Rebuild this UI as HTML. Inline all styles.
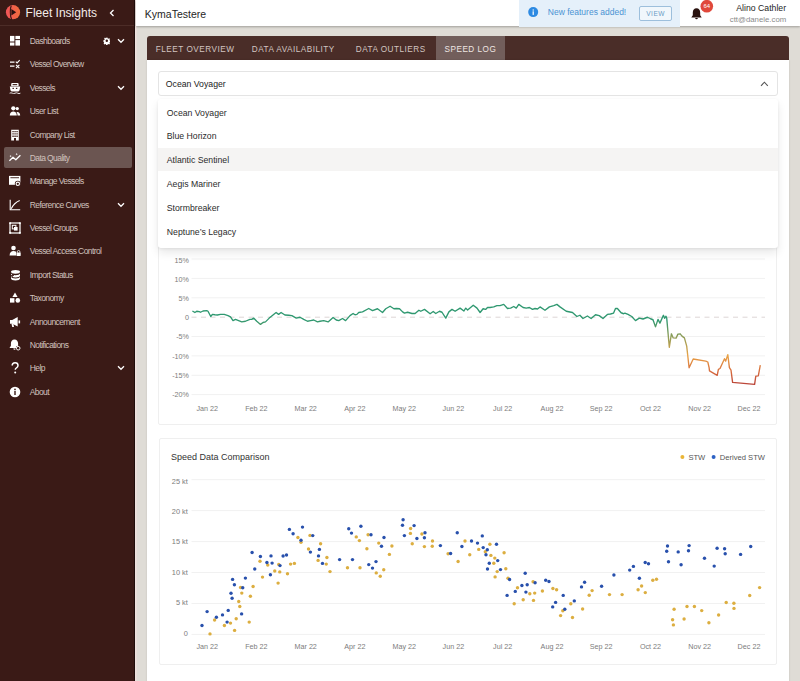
<!DOCTYPE html>
<html><head><meta charset="utf-8">
<style>
*{box-sizing:border-box;margin:0;padding:0}
html,body{width:800px;height:681px;overflow:hidden;background:#dfdcd6;font-family:"Liberation Sans",sans-serif;position:relative}
.abs{position:absolute}
.t{position:absolute;white-space:nowrap;line-height:1}
#sb{position:absolute;left:0;top:0;width:135px;height:681px;background:#3a1a16;border-right:1px solid #1f0d0b}
.st{position:absolute;left:29.8px;line-height:10px;height:10px;font-size:8.5px;letter-spacing:-0.6px;color:#d0c1bd;white-space:nowrap}
.tab{position:absolute;top:38px;height:23.5px;line-height:23.5px;font-size:8.2px;letter-spacing:0.5px;color:#d2c5c1;white-space:nowrap;padding:0 9px}
.dd{position:absolute;left:166.8px;font-size:8.7px;color:#2b2b2b;white-space:nowrap;line-height:10px}
svg text{font-family:"Liberation Sans",sans-serif}
</style></head><body>
<div id="sb">
  <svg class="abs" style="left:4.5px;top:4.8px" width="16" height="16" viewBox="0 0 16 16">
    <defs><linearGradient id="lgo" x1="0" y1="0" x2="1" y2="0"><stop offset="0" stop-color="#f2545a"/><stop offset="1" stop-color="#f06c3c"/></linearGradient></defs>
    <circle cx="8" cy="7.2" r="7.1" fill="url(#lgo)"/>
    <path d="M6.3 0.6 C4.9 3 4.9 11.5 6.6 14" stroke="#3a1a16" stroke-width="1.1" fill="none"/>
    <path d="M6.3 3.9 L11.2 7.3 L6.3 10.6 Z" fill="#2a1210"/>
  </svg>
  <div class="t" style="left:25.6px;top:7px;font-size:12px;color:#f4ece9">Fleet Insights</div>
  <svg class="abs" style="left:109px;top:9px" width="6" height="8" viewBox="0 0 6 8"><path d="M4.5 1 L1.5 4 L4.5 7" stroke="#fff" stroke-width="1.3" fill="none"/></svg>
  <div class="abs" style="left:0;top:24.5px;width:134px;height:1px;background:#4c2c27"></div>
  <div class="abs" style="left:4px;top:147px;width:128px;height:21px;background:#6b5551;border-radius:2px"></div>
  <svg class="abs" style="left:9px;top:35.10px" width="12" height="12" viewBox="0 0 12 12" fill="#fff"><rect x="1" y="0.9" width="4.4" height="5.6"/><rect x="6.4" y="0.9" width="4.6" height="3.2"/><rect x="1" y="7.5" width="4.4" height="3.1"/><rect x="6.4" y="5.1" width="4.6" height="5.5"/></svg><div class="st" style="top:36.10px">Dashboards</div><svg class="abs" style="left:117px;top:38.10px" width="8" height="6" viewBox="0 0 8 6"><path d="M1 1.3 L4 4.3 L7 1.3" stroke="#fff" stroke-width="1.3" fill="none"/></svg><svg class="abs" style="left:9px;top:58.47px" width="12" height="12" viewBox="0 0 12 12" fill="#fff"><path d="M1 4.2h4.5M1 8.2h4.5" stroke="#fff" stroke-width="1.2"/><path d="M6.8 3.6l1.3 1.3 2.6-2.8" stroke="#fff" stroke-width="1.1" fill="none"/><path d="M7 6.8l3.4 3.4M10.4 6.8l-3.4 3.4" stroke="#fff" stroke-width="1.1"/></svg><div class="st" style="top:59.47px">Vessel Overview</div><svg class="abs" style="left:9px;top:81.84px" width="12" height="12" viewBox="0 0 12 12" fill="#fff"><path d="M3.2 0.9h5.4a1 1 0 0 1 1 1v2.3H2.2V1.9a1 1 0 0 1 1-1z"/><rect x="3.6" y="2.1" width="4.6" height="1.1" fill="#3a1a16"/><path d="M0.8 4.6h10.4l-.6 3.4a2 2 0 0 1-2 1.5H3.4a2 2 0 0 1-2-1.5z"/><rect x="3.5" y="5.8" width="1.4" height="1.2" fill="#3a1a16"/><rect x="6.9" y="5.8" width="1.4" height="1.2" fill="#3a1a16"/><path d="M0.6 11.2q1.4-.8 2.7 0t2.7 0 2.7 0 2.7 0" stroke="#fff" stroke-width="0.9" fill="none"/></svg><div class="st" style="top:82.84px">Vessels</div><svg class="abs" style="left:117px;top:84.84px" width="8" height="6" viewBox="0 0 8 6"><path d="M1 1.3 L4 4.3 L7 1.3" stroke="#fff" stroke-width="1.3" fill="none"/></svg><svg class="abs" style="left:9px;top:105.21px" width="12" height="12" viewBox="0 0 12 12" fill="#fff"><circle cx="4.3" cy="3.3" r="2.1"/><circle cx="8.2" cy="3.6" r="1.7"/><path d="M0.8 10.5c0-2.6 1.5-4 3.5-4s3.5 1.4 3.5 4z"/><path d="M8.5 10.5c0-1.5-.4-2.6-1-3.3 2-.5 3.7.8 3.7 3.3z"/></svg><div class="st" style="top:106.21px">User List</div><svg class="abs" style="left:9px;top:128.58px" width="12" height="12" viewBox="0 0 12 12" fill="#fff"><path d="M2.2 0.8h7.6v10.6H2.2z M3.4 2v1.3h1.3V2z M5.4 2v1.3h1.3V2z M7.4 2v1.3h1.3V2z M3.4 4.3v1.3h1.3V4.3z M5.4 4.3v1.3h1.3V4.3z M7.4 4.3v1.3h1.3V4.3z M3.4 6.6v1.3h1.3V6.6z M5.4 6.6v1.3h1.3V6.6z M7.4 6.6v1.3h1.3V6.6z M5 9v2.4h2V9z" fill-rule="evenodd"/></svg><div class="st" style="top:129.58px">Company List</div><svg class="abs" style="left:9px;top:151.95px" width="12" height="12" viewBox="0 0 12 12" fill="#fff"><path d="M0.4 8.8L4 5.3l2.8 2.4L11.4 3.2" stroke="#fff" stroke-width="1.3" fill="none" stroke-linejoin="round"/><path d="M1.6 2.9l.35.8.8.35-.8.35-.35.8-.35-.8-.8-.35.8-.35z"/><path d="M7.7 1l.35.8.8.35-.8.35-.35.8-.35-.8-.8-.35.8-.35z"/></svg><div class="st" style="top:152.95px">Data Quality</div><svg class="abs" style="left:9px;top:175.32px" width="12" height="12" viewBox="0 0 12 12" fill="#fff"><path d="M0 0.9h11.4v8.9H0z"/><rect x="1.4" y="2.3" width="8.6" height="0.9" fill="#3a1a16"/><circle cx="8.8" cy="8.8" r="3" fill="#3a1a16"/><circle cx="8.8" cy="8.8" r="1.7" fill="none" stroke="#fff" stroke-width="1.1"/></svg><div class="st" style="top:176.32px">Manage Vessels</div><svg class="abs" style="left:9px;top:198.69px" width="12" height="12" viewBox="0 0 12 12" fill="#fff"><path d="M1.2 0.8v10h10" stroke="#fff" stroke-width="1.1" fill="none"/><path d="M2.2 9.8c2-4 4.5-6.5 8.5-8.2" stroke="#fff" stroke-width="1.1" fill="none"/></svg><div class="st" style="top:199.69px">Reference Curves</div><svg class="abs" style="left:117px;top:201.69px" width="8" height="6" viewBox="0 0 8 6"><path d="M1 1.3 L4 4.3 L7 1.3" stroke="#fff" stroke-width="1.3" fill="none"/></svg><svg class="abs" style="left:9px;top:222.06px" width="12" height="12" viewBox="0 0 12 12" fill="#fff"><rect x="1" y="1" width="10" height="10" fill="none" stroke="#fff" stroke-width="1.2"/><rect x="3.3" y="3.3" width="3.6" height="3.6" fill="none" stroke="#fff" stroke-width="1"/><rect x="5" y="5" width="3.6" height="3.6"/><rect x="0.3" y="0.3" width="1.8" height="1.8"/><rect x="9.9" y="0.3" width="1.8" height="1.8"/><rect x="0.3" y="9.9" width="1.8" height="1.8"/><rect x="9.9" y="9.9" width="1.8" height="1.8"/></svg><div class="st" style="top:223.06px">Vessel Groups</div><svg class="abs" style="left:9px;top:245.43px" width="12" height="12" viewBox="0 0 12 12" fill="#fff"><circle cx="4.5" cy="3" r="2.3"/><path d="M0.6 10.5c0-3 1.6-4.5 3.9-4.5 1.2 0 2 .3 2.6.8v3.7z"/><rect x="7.5" y="7.6" width="4.2" height="3.4" rx="0.4"/><path d="M8.3 7.8V6.8a1.3 1.3 0 0 1 2.6 0v1" stroke="#fff" stroke-width="0.8" fill="none"/></svg><div class="st" style="top:246.43px">Vessel Access Control</div><svg class="abs" style="left:9px;top:268.80px" width="12" height="12" viewBox="0 0 12 12" fill="#fff"><ellipse cx="6.5" cy="2.8" rx="4.5" ry="1.9"/><path d="M2 4.3c0 1.2 2 2 4.5 2s4.5-.8 4.5-2v2.3c0 1.2-2 2-4.5 2s-4.5-.8-4.5-2z"/><path d="M2 7.6c0 1.2 2 2 4.5 2s4.5-.8 4.5-2v1.9c0 1.2-2 2-4.5 2s-4.5-.8-4.5-2z"/><path d="M0.5 6.5h4l-1.3-1.3M4.5 6.5l-1.3 1.3" stroke="#3a1a16" stroke-width="0.9" fill="none"/></svg><div class="st" style="top:269.80px">Import Status</div><svg class="abs" style="left:9px;top:292.17px" width="12" height="12" viewBox="0 0 12 12" fill="#fff"><path d="M6 0.6l2.6 4.3H3.4z"/><rect x="1" y="6.2" width="4.4" height="4.4"/><circle cx="8.8" cy="8.4" r="2.3"/></svg><div class="st" style="top:293.17px">Taxonomy</div><svg class="abs" style="left:9px;top:315.54px" width="12" height="12" viewBox="0 0 12 12" fill="#fff"><path d="M1 4h2.2l5.5-3v9.6L3.2 7.7H1z"/><path d="M2.5 7.8h1.8l.7 3.2H3.2z"/><rect x="9.5" y="4.4" width="1.6" height="3"/></svg><div class="st" style="top:316.54px">Announcement</div><svg class="abs" style="left:9px;top:338.91px" width="12" height="12" viewBox="0 0 12 12" fill="#fff"><path d="M5.5 0.6c2.3 0 3.6 1.7 3.6 4v2.1L10.6 9H0.5l1.4-2.3V4.6c0-2.3 1.3-4 3.6-4z"/><path d="M4.3 9.6h2.4a1.2 1.2 0 0 1-2.4 0z"/><circle cx="9.2" cy="9.2" r="2.4" fill="#3a1a16"/><circle cx="9.2" cy="9.2" r="1.8" fill="none" stroke="#fff" stroke-width="1"/></svg><div class="st" style="top:339.91px">Notifications</div><svg class="abs" style="left:9px;top:362.28px" width="12" height="12" viewBox="0 0 12 12" fill="#fff"><path d="M3.2 3.6c0-1.8 1.3-2.8 2.9-2.8 1.7 0 2.9 1 2.9 2.6 0 1.5-1 2-1.8 2.6-.7.5-.9.9-.9 1.8" stroke="#fff" stroke-width="1.5" fill="none"/><circle cx="6.2" cy="10.4" r="1"/></svg><div class="st" style="top:363.28px">Help</div><svg class="abs" style="left:117px;top:365.28px" width="8" height="6" viewBox="0 0 8 6"><path d="M1 1.3 L4 4.3 L7 1.3" stroke="#fff" stroke-width="1.3" fill="none"/></svg><svg class="abs" style="left:9px;top:385.65px" width="12" height="12" viewBox="0 0 12 12" fill="#fff"><circle cx="6" cy="6" r="5.3"/><rect x="5.3" y="5" width="1.4" height="4" fill="#3a1a16"/><circle cx="6" cy="3.4" r="0.85" fill="#3a1a16"/></svg><div class="st" style="top:386.65px">About</div><svg class="abs" style="left:102.6px;top:37.3px" width="7.6" height="7.6" viewBox="0 0 10 10"><path fill="#fff" fill-rule="evenodd" d="M4.2 0.5h1.6l.3 1.3.9.4 1.1-.7 1.1 1.1-.7 1.1.4.9 1.3.3v1.6l-1.3.3-.4.9.7 1.1-1.1 1.1-1.1-.7-.9.4-.3 1.3H4.2l-.3-1.3-.9-.4-1.1.7-1.1-1.1.7-1.1-.4-.9L.5 5.8V4.2l1.3-.3.4-.9-.7-1.1 1.1-1.1 1.1.7.9-.4z M5 3.4a1.6 1.6 0 1 0 0 3.2 1.6 1.6 0 1 0 0-3.2z"/></svg>
</div>
<div class="abs" style="left:135px;top:0;width:2px;height:681px;background:linear-gradient(90deg,#f0e2de,#e6dcd8)"></div>
<div class="abs" style="left:136px;top:0;width:664px;height:26.3px;background:#fff;box-shadow:0 1px 2px rgba(0,0,0,.28)">
</div>
<div class="t" style="left:144.8px;top:9px;font-size:10.5px;color:#262626">KymaTestere</div>
<div class="abs" style="left:518.5px;top:0;width:161.3px;height:26.5px;background:#e5f0fa"></div>
<svg class="abs" style="left:527.5px;top:7.2px" width="11" height="11" viewBox="0 0 11 11"><circle cx="5.2" cy="5.1" r="5" fill="#2d8ae2"/><rect x="4.6" y="4.3" width="1.2" height="3.6" fill="#fff"/><circle cx="5.2" cy="3" r="0.7" fill="#fff"/></svg>
<div class="t" style="left:547.8px;top:8.2px;font-size:8.5px;color:#4b93d3">New features added!</div>
<div class="abs" style="left:639.2px;top:6px;width:32.8px;height:15.2px;border:1px solid #9dbfdc;border-radius:2px;background:#f1f7fc;font-size:6.6px;color:#6b9cc6;text-align:center;line-height:13.2px;letter-spacing:0.5px">VIEW</div>
<svg class="abs" style="left:689.5px;top:6.5px" width="13" height="14" viewBox="0 0 13 14"><path d="M6.5 1.2c2.3 0 3.7 1.8 3.7 4.2v2.8l1.5 2.2H1.3l1.5-2.2V5.4c0-2.4 1.4-4.2 3.7-4.2z" fill="#2a120f"/><path d="M5.2 11h2.6a1.3 1.3 0 0 1-2.6 0z" fill="#2a120f"/></svg>
<svg class="abs" style="left:699.8px;top:0px" width="14" height="13" viewBox="0 0 14 13"><circle cx="6.8" cy="6.2" r="6.3" fill="#e0483b"/><text x="6.8" y="8.3" text-anchor="middle" font-size="6" fill="#fff">64</text></svg>
<div class="t" style="left:736.3px;top:3.9px;font-size:8.7px;color:#1e1e1e">Alino Cathler</div>
<div class="t" style="left:729.8px;top:15.5px;font-size:7.8px;color:#8a8a8a">ctt@danele.com</div>

<div class="abs" style="left:146.8px;top:36.3px;width:642px;height:24px;background:#4a2d28;border-radius:3px 3px 0 0"></div>
<div class="tab" style="left:146.8px">FLEET OVERVIEW</div>
<div class="tab" style="left:242.8px">DATA AVAILABILITY</div>
<div class="tab" style="left:346.8px">DATA OUTLIERS</div>
<div class="abs" style="left:435.5px;top:36.3px;width:69.5px;height:24px;background:#725e5b"></div>
<div class="tab" style="left:435.5px;color:#efe6e3">SPEED LOG</div>
<div class="abs" style="left:146.8px;top:60.3px;width:642px;height:630px;background:#fff;box-shadow:0 0 2px rgba(0,0,0,.12)"></div>

<div class="abs" style="left:158px;top:71.4px;width:619.5px;height:24.2px;border:1px solid #e4e4e4;border-radius:3px;background:#fff"></div>
<div class="t" style="left:165.8px;top:80.3px;font-size:8.7px;color:#222">Ocean Voyager</div>
<svg class="abs" style="left:759px;top:80px" width="12" height="8" viewBox="0 0 12 8"><path d="M2 5.8 L5.4 2.2 L8.8 5.8" stroke="#555" stroke-width="1.1" fill="none"/></svg>

<div class="abs" style="left:158px;top:246px;width:619px;height:178.8px;border:1px solid #efefef;border-radius:2px;background:#fff"></div>
<div class="abs" style="left:158.5px;top:438px;width:618.5px;height:226.5px;border:1px solid #efefef;border-radius:2px;background:#fff"></div>
<div class="t" style="left:171px;top:452.8px;font-size:9px;color:#333">Speed Data Comparison</div>
<svg class="abs" style="left:678px;top:452px" width="100" height="10" viewBox="678 452 100 10">
<circle cx="682.4" cy="457" r="2" fill="#eab536"/><text x="688.4" y="459.8" font-size="7.6" fill="#555">STW</text>
<circle cx="713.6" cy="457" r="2" fill="#2d62c4"/><text x="719.8" y="459.8" font-size="7.6" fill="#555">Derived STW</text>
</svg>

<svg class="abs" style="left:0;top:0" width="800" height="681" viewBox="0 0 800 681">
<defs><linearGradient id="lg" gradientUnits="userSpaceOnUse" x1="0" y1="317" x2="0" y2="385">
<stop offset="0" stop-color="#2f9870"/><stop offset="0.05" stop-color="#2f9870"/><stop offset="0.24" stop-color="#7f9c5c"/><stop offset="0.57" stop-color="#e9a346"/><stop offset="0.81" stop-color="#d66a3e"/><stop offset="1" stop-color="#b9443a"/></linearGradient></defs>
<line x1="191.5" x2="765" y1="259.0" y2="259.0" stroke="#f1f1f1" stroke-width="1"/><line x1="191.5" x2="765" y1="278.4" y2="278.4" stroke="#f1f1f1" stroke-width="1"/><line x1="191.5" x2="765" y1="297.8" y2="297.8" stroke="#f1f1f1" stroke-width="1"/><line x1="191.5" x2="765" y1="317.2" y2="317.2" stroke="#ddd6d6" stroke-width="1" stroke-dasharray="5 4.5"/><line x1="191.5" x2="765" y1="336.5" y2="336.5" stroke="#f1f1f1" stroke-width="1"/><line x1="191.5" x2="765" y1="355.9" y2="355.9" stroke="#f1f1f1" stroke-width="1"/><line x1="191.5" x2="765" y1="375.3" y2="375.3" stroke="#f1f1f1" stroke-width="1"/><line x1="191.5" x2="765" y1="394.6" y2="394.6" stroke="#f1f1f1" stroke-width="1"/><text x="189" y="262.80" text-anchor="end" font-size="7.2" fill="#7c7c7c">15%</text><text x="189" y="281.97" text-anchor="end" font-size="7.2" fill="#7c7c7c">10%</text><text x="189" y="301.14" text-anchor="end" font-size="7.2" fill="#7c7c7c">5%</text><text x="189" y="320.31" text-anchor="end" font-size="7.2" fill="#7c7c7c">0</text><text x="189" y="339.48" text-anchor="end" font-size="7.2" fill="#7c7c7c">-5%</text><text x="189" y="358.65" text-anchor="end" font-size="7.2" fill="#7c7c7c">-10%</text><text x="189" y="377.82" text-anchor="end" font-size="7.2" fill="#7c7c7c">-15%</text><text x="189" y="396.99" text-anchor="end" font-size="7.2" fill="#7c7c7c">-20%</text><text x="207.2" y="411.2" text-anchor="middle" font-size="7.2" fill="#7c7c7c">Jan 22</text><text x="256.4" y="411.2" text-anchor="middle" font-size="7.2" fill="#7c7c7c">Feb 22</text><text x="305.7" y="411.2" text-anchor="middle" font-size="7.2" fill="#7c7c7c">Mar 22</text><text x="354.9" y="411.2" text-anchor="middle" font-size="7.2" fill="#7c7c7c">Apr 22</text><text x="404.2" y="411.2" text-anchor="middle" font-size="7.2" fill="#7c7c7c">May 22</text><text x="453.4" y="411.2" text-anchor="middle" font-size="7.2" fill="#7c7c7c">Jun 22</text><text x="502.7" y="411.2" text-anchor="middle" font-size="7.2" fill="#7c7c7c">Jul 22</text><text x="552.0" y="411.2" text-anchor="middle" font-size="7.2" fill="#7c7c7c">Aug 22</text><text x="601.2" y="411.2" text-anchor="middle" font-size="7.2" fill="#7c7c7c">Sep 22</text><text x="650.5" y="411.2" text-anchor="middle" font-size="7.2" fill="#7c7c7c">Oct 22</text><text x="699.7" y="411.2" text-anchor="middle" font-size="7.2" fill="#7c7c7c">Nov 22</text><text x="749.0" y="411.2" text-anchor="middle" font-size="7.2" fill="#7c7c7c">Dec 22</text><polyline points="192.4,311 194.9,312.5 196.75,311.25 199.25,311.6 200.5,312.25 203,311 206.75,310.6 208,311.25 210.75,316.5 212.4,314.4 214.9,314.75 217.4,315 220.5,314.4 224.25,314.4 228,315.6 230.5,316.9 233,320.6 235.5,319.4 238.6,320.6 241.75,321.9 245.5,321.25 249.9,319.4 251.75,319.4 253.6,318.1 256.75,321.25 260.5,324.4 263,322.5 265.5,321.9 269.25,318.1 273,315 276.1,312.5 278.6,314.4 281.1,312.5 284.9,315 288.75,315.25 291.9,315.6 296.25,318.1 300,317.25 303.75,319.4 307.5,321.25 310.6,320.6 313.75,320 317.5,321.9 320,321.25 323.75,320.6 328.1,321.9 333.1,317.5 336.25,320 338.75,320.6 342.5,318.5 345.6,320.6 350,315.6 353.1,313.5 355,314.75 356.9,314.4 358.75,312.5 362.5,311.9 368.75,308.5 372.5,310.6 377.5,308.75 382.5,312.5 385.75,308.75 390.1,306.25 393.9,308.75 396.4,308.5 399.5,308.75 402.6,311.9 404.5,313.1 407.6,312.25 412,313.5 415.1,313.5 418.9,310.25 420.75,311.25 424.5,309.4 430.1,313.75 433.25,311.5 435.75,313.5 439.5,311.25 442,312.25 445.75,318.1 448.9,311.9 452,309.4 455.1,311.25 460.1,308.1 463.9,311 465.75,308.1 467.6,310 473.25,305.25 477,308.1 480.1,312.5 483.1,308.75 485.6,309.4 487.5,307.5 490,307.5 493.75,306.9 496.9,305.6 500,305.6 503.75,304.4 507.5,308.5 510.6,308.1 513.75,306.5 516.25,308.1 518.75,304.4 523.1,307.5 526.25,308.1 529.4,307.5 532.5,309.4 535,308.5 537.5,309 540,306.9 545,310.25 549.4,306.9 553.75,305.6 556.9,304.4 560,306.9 566.25,311.25 572.5,312.5 576.9,316.5 579.9,315.25 583,318.5 587.4,316 591.1,318.5 595.5,314.75 599.25,315.6 603,318.5 607.4,314.4 610.5,314 613.6,313.1 615.5,308.5 617.4,308.5 621.1,312.75 623.6,313.75 624.9,313.1 628,314.4 631.75,316.5 635.5,320.6 639.25,318.1 643,319 647.4,317.25 650.5,318.75 653,319.75 655.5,326.9 658,319.4 659.9,323.1 663.4,315.3 664.6,318.3 666,316.2 666.7,317.9 669.3,347.3 671.4,333.8 673.2,337.9 676.1,338.1 677.9,334.1 680.2,333.8 682,336.1 684.4,337.9 686.7,346.1 689.1,367.8 693.2,359 705.8,361.1 707.8,362 709.1,367.6 709.5,370.9 717.2,375.4 718.4,369.3 720,368.5 724.5,358.7 725.7,361.1 727.8,354.6 729.4,367.6 731,370.1 732.6,382.3 754.6,384.3 755.8,376.2 758.3,375.8 760.3,365.2" fill="none" stroke="url(#lg)" stroke-width="1.35" stroke-linejoin="round"/>
<line x1="191.5" x2="765" y1="479.7" y2="479.7" stroke="#f1f1f1" stroke-width="1"/><line x1="191.5" x2="765" y1="510.6" y2="510.6" stroke="#f1f1f1" stroke-width="1"/><line x1="191.5" x2="765" y1="541.6" y2="541.6" stroke="#f1f1f1" stroke-width="1"/><line x1="191.5" x2="765" y1="572.5" y2="572.5" stroke="#f1f1f1" stroke-width="1"/><line x1="191.5" x2="765" y1="603.5" y2="603.5" stroke="#f1f1f1" stroke-width="1"/><line x1="191.5" x2="765" y1="634.4" y2="634.4" stroke="#f1f1f1" stroke-width="1"/><text x="187.8" y="483.60" text-anchor="end" font-size="7.4" fill="#7c7c7c">25 kt</text><text x="187.8" y="514.04" text-anchor="end" font-size="7.4" fill="#7c7c7c">20 kt</text><text x="187.8" y="544.48" text-anchor="end" font-size="7.4" fill="#7c7c7c">15 kt</text><text x="187.8" y="574.92" text-anchor="end" font-size="7.4" fill="#7c7c7c">10 kt</text><text x="187.8" y="605.36" text-anchor="end" font-size="7.4" fill="#7c7c7c">5 kt</text><text x="187.8" y="635.80" text-anchor="end" font-size="7.4" fill="#7c7c7c">0</text><text x="207.2" y="649" text-anchor="middle" font-size="7.2" fill="#7c7c7c">Jan 22</text><text x="256.4" y="649" text-anchor="middle" font-size="7.2" fill="#7c7c7c">Feb 22</text><text x="305.7" y="649" text-anchor="middle" font-size="7.2" fill="#7c7c7c">Mar 22</text><text x="354.9" y="649" text-anchor="middle" font-size="7.2" fill="#7c7c7c">Apr 22</text><text x="404.2" y="649" text-anchor="middle" font-size="7.2" fill="#7c7c7c">May 22</text><text x="453.4" y="649" text-anchor="middle" font-size="7.2" fill="#7c7c7c">Jun 22</text><text x="502.7" y="649" text-anchor="middle" font-size="7.2" fill="#7c7c7c">Jul 22</text><text x="552.0" y="649" text-anchor="middle" font-size="7.2" fill="#7c7c7c">Aug 22</text><text x="601.2" y="649" text-anchor="middle" font-size="7.2" fill="#7c7c7c">Sep 22</text><text x="650.5" y="649" text-anchor="middle" font-size="7.2" fill="#7c7c7c">Oct 22</text><text x="699.7" y="649" text-anchor="middle" font-size="7.2" fill="#7c7c7c">Nov 22</text><text x="749.0" y="649" text-anchor="middle" font-size="7.2" fill="#7c7c7c">Dec 22</text><circle cx="241.8" cy="593.1" r="1.7" fill="#dcae40"/><circle cx="250.4" cy="596.2" r="1.7" fill="#dcae40"/><circle cx="238.75" cy="601.5" r="1.7" fill="#dcae40"/><circle cx="239.8" cy="606.5" r="1.7" fill="#dcae40"/><circle cx="214.6" cy="620" r="1.7" fill="#dcae40"/><circle cx="236.2" cy="618.8" r="1.7" fill="#dcae40"/><circle cx="230.5" cy="623.1" r="1.7" fill="#dcae40"/><circle cx="224.4" cy="625.5" r="1.7" fill="#dcae40"/><circle cx="234.6" cy="630.4" r="1.7" fill="#dcae40"/><circle cx="249.2" cy="622.1" r="1.7" fill="#dcae40"/><circle cx="210" cy="633.9" r="1.7" fill="#dcae40"/><circle cx="260" cy="561.25" r="1.7" fill="#dcae40"/><circle cx="267.75" cy="565" r="1.7" fill="#dcae40"/><circle cx="278.75" cy="564.4" r="1.7" fill="#dcae40"/><circle cx="274.75" cy="571" r="1.7" fill="#dcae40"/><circle cx="279.75" cy="571.9" r="1.7" fill="#dcae40"/><circle cx="287.5" cy="573.75" r="1.7" fill="#dcae40"/><circle cx="262.5" cy="577.1" r="1.7" fill="#dcae40"/><circle cx="253.1" cy="586.5" r="1.7" fill="#dcae40"/><circle cx="278.1" cy="583.1" r="1.7" fill="#dcae40"/><circle cx="240.6" cy="587.5" r="1.7" fill="#dcae40"/><circle cx="297.9" cy="537.5" r="1.7" fill="#dcae40"/><circle cx="310" cy="535.4" r="1.7" fill="#dcae40"/><circle cx="301" cy="542.25" r="1.7" fill="#dcae40"/><circle cx="320.6" cy="543.75" r="1.7" fill="#dcae40"/><circle cx="308.5" cy="549" r="1.7" fill="#dcae40"/><circle cx="326.9" cy="557.5" r="1.7" fill="#dcae40"/><circle cx="318.1" cy="560.4" r="1.7" fill="#dcae40"/><circle cx="326.25" cy="564.1" r="1.7" fill="#dcae40"/><circle cx="290.6" cy="564.1" r="1.7" fill="#dcae40"/><circle cx="294.4" cy="563.4" r="1.7" fill="#dcae40"/><circle cx="330" cy="571.6" r="1.7" fill="#dcae40"/><circle cx="347.5" cy="567.75" r="1.7" fill="#dcae40"/><circle cx="360" cy="567.75" r="1.7" fill="#dcae40"/><circle cx="356.25" cy="536.9" r="1.7" fill="#dcae40"/><circle cx="359.4" cy="540.6" r="1.7" fill="#dcae40"/><circle cx="368.1" cy="534.75" r="1.7" fill="#dcae40"/><circle cx="378.75" cy="543.1" r="1.7" fill="#dcae40"/><circle cx="366.9" cy="548.75" r="1.7" fill="#dcae40"/><circle cx="383.75" cy="569.75" r="1.7" fill="#dcae40"/><circle cx="376.25" cy="572.9" r="1.7" fill="#dcae40"/><circle cx="380.25" cy="576.25" r="1.7" fill="#dcae40"/><circle cx="410.6" cy="528.5" r="1.7" fill="#dcae40"/><circle cx="410.4" cy="533.4" r="1.7" fill="#dcae40"/><circle cx="421.9" cy="534" r="1.7" fill="#dcae40"/><circle cx="412.25" cy="543.75" r="1.7" fill="#dcae40"/><circle cx="432.5" cy="541" r="1.7" fill="#dcae40"/><circle cx="424.4" cy="546.6" r="1.7" fill="#dcae40"/><circle cx="432.25" cy="546.25" r="1.7" fill="#dcae40"/><circle cx="391.9" cy="546" r="1.7" fill="#dcae40"/><circle cx="389.4" cy="554.4" r="1.7" fill="#dcae40"/><circle cx="448.1" cy="553.75" r="1.7" fill="#dcae40"/><circle cx="458.1" cy="561.5" r="1.7" fill="#dcae40"/><circle cx="465" cy="541" r="1.7" fill="#dcae40"/><circle cx="469.75" cy="554.75" r="1.7" fill="#dcae40"/><circle cx="478.75" cy="549.4" r="1.7" fill="#dcae40"/><circle cx="489.9" cy="544.3" r="1.7" fill="#dcae40"/><circle cx="485.3" cy="551.8" r="1.7" fill="#dcae40"/><circle cx="504.1" cy="552.7" r="1.7" fill="#dcae40"/><circle cx="490.9" cy="555.4" r="1.7" fill="#dcae40"/><circle cx="494.8" cy="558.1" r="1.7" fill="#dcae40"/><circle cx="493.8" cy="563.3" r="1.7" fill="#dcae40"/><circle cx="505.8" cy="568.7" r="1.7" fill="#dcae40"/><circle cx="497.2" cy="571.6" r="1.7" fill="#dcae40"/><circle cx="495.1" cy="576.9" r="1.7" fill="#dcae40"/><circle cx="508" cy="578.2" r="1.7" fill="#dcae40"/><circle cx="517.5" cy="587.7" r="1.7" fill="#dcae40"/><circle cx="533.1" cy="581.8" r="1.7" fill="#dcae40"/><circle cx="542.4" cy="591" r="1.7" fill="#dcae40"/><circle cx="534.7" cy="593.1" r="1.7" fill="#dcae40"/><circle cx="529.8" cy="593.8" r="1.7" fill="#dcae40"/><circle cx="552.9" cy="588.5" r="1.7" fill="#dcae40"/><circle cx="556.6" cy="589.7" r="1.7" fill="#dcae40"/><circle cx="523.2" cy="599.7" r="1.7" fill="#dcae40"/><circle cx="533.5" cy="600.4" r="1.7" fill="#dcae40"/><circle cx="514.2" cy="603.7" r="1.7" fill="#dcae40"/><circle cx="570.8" cy="603.7" r="1.7" fill="#dcae40"/><circle cx="562.8" cy="610.8" r="1.7" fill="#dcae40"/><circle cx="560.6" cy="615.6" r="1.7" fill="#dcae40"/><circle cx="572.5" cy="617.5" r="1.7" fill="#dcae40"/><circle cx="582.6" cy="609" r="1.7" fill="#dcae40"/><circle cx="589.2" cy="595.2" r="1.7" fill="#dcae40"/><circle cx="592.1" cy="590.6" r="1.7" fill="#dcae40"/><circle cx="609.5" cy="594.6" r="1.7" fill="#dcae40"/><circle cx="622.1" cy="594.6" r="1.7" fill="#dcae40"/><circle cx="638.1" cy="589.8" r="1.7" fill="#dcae40"/><circle cx="641.6" cy="586" r="1.7" fill="#dcae40"/><circle cx="645.3" cy="592.6" r="1.7" fill="#dcae40"/><circle cx="652.8" cy="580.3" r="1.7" fill="#dcae40"/><circle cx="656.5" cy="579.2" r="1.7" fill="#dcae40"/><circle cx="759.6" cy="587.6" r="1.7" fill="#dcae40"/><circle cx="749.7" cy="595.5" r="1.7" fill="#dcae40"/><circle cx="726.2" cy="602.5" r="1.7" fill="#dcae40"/><circle cx="733.9" cy="603.3" r="1.7" fill="#dcae40"/><circle cx="734" cy="608.4" r="1.7" fill="#dcae40"/><circle cx="687" cy="606.5" r="1.7" fill="#dcae40"/><circle cx="694.4" cy="606.5" r="1.7" fill="#dcae40"/><circle cx="674.1" cy="609.2" r="1.7" fill="#dcae40"/><circle cx="701.7" cy="610.6" r="1.7" fill="#dcae40"/><circle cx="718.6" cy="615" r="1.7" fill="#dcae40"/><circle cx="672.6" cy="619.7" r="1.7" fill="#dcae40"/><circle cx="684.1" cy="619" r="1.7" fill="#dcae40"/><circle cx="673.4" cy="624.9" r="1.7" fill="#dcae40"/><circle cx="708.9" cy="622.8" r="1.7" fill="#dcae40"/><circle cx="231" cy="593.3" r="1.7" fill="#2850ac"/><circle cx="232.1" cy="598.2" r="1.7" fill="#2850ac"/><circle cx="207.1" cy="611.6" r="1.7" fill="#2850ac"/><circle cx="228.2" cy="610.4" r="1.7" fill="#2850ac"/><circle cx="216.4" cy="617.2" r="1.7" fill="#2850ac"/><circle cx="222.5" cy="614.9" r="1.7" fill="#2850ac"/><circle cx="241.6" cy="613.9" r="1.7" fill="#2850ac"/><circle cx="227.1" cy="622.1" r="1.7" fill="#2850ac"/><circle cx="202" cy="625.5" r="1.7" fill="#2850ac"/><circle cx="252.1" cy="552.5" r="1.7" fill="#2850ac"/><circle cx="260.4" cy="556.5" r="1.7" fill="#2850ac"/><circle cx="271" cy="555.9" r="1.7" fill="#2850ac"/><circle cx="283.1" cy="556" r="1.7" fill="#2850ac"/><circle cx="286.5" cy="555" r="1.7" fill="#2850ac"/><circle cx="289.4" cy="529.4" r="1.7" fill="#2850ac"/><circle cx="266.9" cy="562.5" r="1.7" fill="#2850ac"/><circle cx="272.1" cy="563.1" r="1.7" fill="#2850ac"/><circle cx="280" cy="565.6" r="1.7" fill="#2850ac"/><circle cx="254.75" cy="569" r="1.7" fill="#2850ac"/><circle cx="270.4" cy="574.75" r="1.7" fill="#2850ac"/><circle cx="232.6" cy="579.4" r="1.7" fill="#2850ac"/><circle cx="245.4" cy="578.1" r="1.7" fill="#2850ac"/><circle cx="234.4" cy="584.75" r="1.7" fill="#2850ac"/><circle cx="242.75" cy="587.75" r="1.7" fill="#2850ac"/><circle cx="302.5" cy="527.1" r="1.7" fill="#2850ac"/><circle cx="293.1" cy="533.75" r="1.7" fill="#2850ac"/><circle cx="312.75" cy="535.6" r="1.7" fill="#2850ac"/><circle cx="301" cy="540.25" r="1.7" fill="#2850ac"/><circle cx="319.4" cy="549.4" r="1.7" fill="#2850ac"/><circle cx="310.4" cy="552.1" r="1.7" fill="#2850ac"/><circle cx="318.5" cy="555.9" r="1.7" fill="#2850ac"/><circle cx="322.5" cy="563.4" r="1.7" fill="#2850ac"/><circle cx="339.6" cy="559.6" r="1.7" fill="#2850ac"/><circle cx="352.5" cy="559.6" r="1.7" fill="#2850ac"/><circle cx="348.75" cy="528.75" r="1.7" fill="#2850ac"/><circle cx="360.9" cy="526.25" r="1.7" fill="#2850ac"/><circle cx="351.5" cy="533.1" r="1.7" fill="#2850ac"/><circle cx="371" cy="534.75" r="1.7" fill="#2850ac"/><circle cx="384" cy="537.5" r="1.7" fill="#2850ac"/><circle cx="381.5" cy="546.25" r="1.7" fill="#2850ac"/><circle cx="376" cy="561.6" r="1.7" fill="#2850ac"/><circle cx="368.75" cy="564.6" r="1.7" fill="#2850ac"/><circle cx="372.5" cy="568.1" r="1.7" fill="#2850ac"/><circle cx="403.1" cy="519.75" r="1.7" fill="#2850ac"/><circle cx="402.5" cy="525.25" r="1.7" fill="#2850ac"/><circle cx="414.1" cy="525.6" r="1.7" fill="#2850ac"/><circle cx="404.4" cy="535.6" r="1.7" fill="#2850ac"/><circle cx="416.9" cy="538.5" r="1.7" fill="#2850ac"/><circle cx="425" cy="532.75" r="1.7" fill="#2850ac"/><circle cx="424.4" cy="537.75" r="1.7" fill="#2850ac"/><circle cx="440.4" cy="545.6" r="1.7" fill="#2850ac"/><circle cx="450.6" cy="553.5" r="1.7" fill="#2850ac"/><circle cx="457.25" cy="532.75" r="1.7" fill="#2850ac"/><circle cx="461.9" cy="546.5" r="1.7" fill="#2850ac"/><circle cx="471.5" cy="541" r="1.7" fill="#2850ac"/><circle cx="477.5" cy="543.1" r="1.7" fill="#2850ac"/><circle cx="482.3" cy="535.9" r="1.7" fill="#2850ac"/><circle cx="496.5" cy="544.3" r="1.7" fill="#2850ac"/><circle cx="483.2" cy="547.6" r="1.7" fill="#2850ac"/><circle cx="487.3" cy="549.8" r="1.7" fill="#2850ac"/><circle cx="486" cy="554.8" r="1.7" fill="#2850ac"/><circle cx="497.7" cy="560.6" r="1.7" fill="#2850ac"/><circle cx="489.3" cy="563.3" r="1.7" fill="#2850ac"/><circle cx="487.5" cy="569" r="1.7" fill="#2850ac"/><circle cx="500.5" cy="569.6" r="1.7" fill="#2850ac"/><circle cx="525.2" cy="573.2" r="1.7" fill="#2850ac"/><circle cx="509.6" cy="579.5" r="1.7" fill="#2850ac"/><circle cx="535.1" cy="582.8" r="1.7" fill="#2850ac"/><circle cx="527.2" cy="584.8" r="1.7" fill="#2850ac"/><circle cx="521.9" cy="585.5" r="1.7" fill="#2850ac"/><circle cx="515.3" cy="591.4" r="1.7" fill="#2850ac"/><circle cx="525.9" cy="592.1" r="1.7" fill="#2850ac"/><circle cx="507.1" cy="595.4" r="1.7" fill="#2850ac"/><circle cx="545.7" cy="580.2" r="1.7" fill="#2850ac"/><circle cx="549" cy="581.5" r="1.7" fill="#2850ac"/><circle cx="563.2" cy="595.4" r="1.7" fill="#2850ac"/><circle cx="555.6" cy="602.4" r="1.7" fill="#2850ac"/><circle cx="552.7" cy="606.9" r="1.7" fill="#2850ac"/><circle cx="564.8" cy="609.3" r="1.7" fill="#2850ac"/><circle cx="574.3" cy="600.9" r="1.7" fill="#2850ac"/><circle cx="581.5" cy="586.9" r="1.7" fill="#2850ac"/><circle cx="584.6" cy="582.3" r="1.7" fill="#2850ac"/><circle cx="601.6" cy="586.2" r="1.7" fill="#2850ac"/><circle cx="613.9" cy="575" r="1.7" fill="#2850ac"/><circle cx="629.7" cy="570.1" r="1.7" fill="#2850ac"/><circle cx="633.4" cy="566.4" r="1.7" fill="#2850ac"/><circle cx="645.2" cy="562.5" r="1.7" fill="#2850ac"/><circle cx="648.5" cy="563.8" r="1.7" fill="#2850ac"/><circle cx="639.4" cy="578.3" r="1.7" fill="#2850ac"/><circle cx="667.5" cy="546" r="1.7" fill="#2850ac"/><circle cx="666.7" cy="551.2" r="1.7" fill="#2850ac"/><circle cx="689.1" cy="545.6" r="1.7" fill="#2850ac"/><circle cx="688.5" cy="550.7" r="1.7" fill="#2850ac"/><circle cx="678.2" cy="551.9" r="1.7" fill="#2850ac"/><circle cx="668.5" cy="561.7" r="1.7" fill="#2850ac"/><circle cx="681.1" cy="564.7" r="1.7" fill="#2850ac"/><circle cx="704.5" cy="558.2" r="1.7" fill="#2850ac"/><circle cx="717.1" cy="548.2" r="1.7" fill="#2850ac"/><circle cx="724.6" cy="548.7" r="1.7" fill="#2850ac"/><circle cx="725.2" cy="553.8" r="1.7" fill="#2850ac"/><circle cx="714.2" cy="566.1" r="1.7" fill="#2850ac"/><circle cx="740.6" cy="554.4" r="1.7" fill="#2850ac"/><circle cx="750.7" cy="546.5" r="1.7" fill="#2850ac"/>
</svg>

<div class="abs" style="left:157.5px;top:98.5px;width:620px;height:149px;background:#fff;border-radius:3px;box-shadow:0 5px 10px rgba(0,0,0,.09),0 1px 3px rgba(0,0,0,.07)"></div>
<div class="abs" style="left:157.5px;top:147.8px;width:620px;height:23.3px;background:#f5f4f3"></div>
<div class="dd" style="top:107.5px">Ocean Voyager</div>
<div class="dd" style="top:131.4px">Blue Horizon</div>
<div class="dd" style="top:155px">Atlantic Sentinel</div>
<div class="dd" style="top:179px">Aegis Mariner</div>
<div class="dd" style="top:203px">Stormbreaker</div>
<div class="dd" style="top:227px">Neptune&rsquo;s Legacy</div>
</body></html>
